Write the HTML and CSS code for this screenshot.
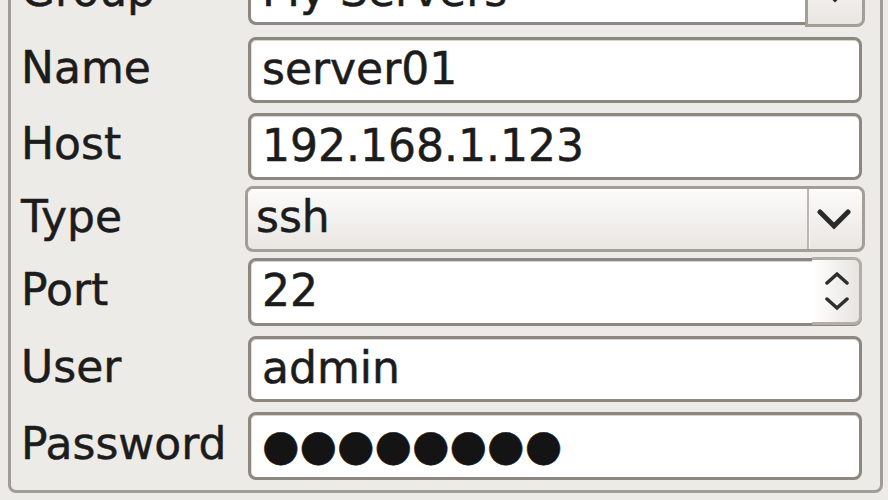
FILE: index.html
```html
<!DOCTYPE html>
<html>
<head>
<meta charset="utf-8">
<link rel="stylesheet" href="styles.css">
</head>
<body>
<div class="frame">
  <div class="row row-group">
    <div class="label">Group</div>
    <div class="combo-entry">
      <div class="ce-text">My Servers</div>
      <div class="ce-btn">
        <svg class="chev-down" viewBox="0 0 32 20" width="32" height="20"><polyline points="3,3 16,16 29,3"/></svg>
      </div>
    </div>
  </div>
  <div class="row row-name">
    <div class="label">Name</div>
    <div class="entry">server01</div>
  </div>
  <div class="row row-host">
    <div class="label">Host</div>
    <div class="entry">192.168.1.123</div>
  </div>
  <div class="row row-type">
    <div class="label">Type</div>
    <div class="combo">
      <div class="combo-text">ssh</div>
      <div class="combo-btn">
        <svg class="chev-down" viewBox="0 0 34 22" width="34" height="22"><polyline points="3,4 17,18 31,4"/></svg>
      </div>
    </div>
  </div>
  <div class="row row-port">
    <div class="label">Port</div>
    <div class="entry spin">
      <div class="spin-text">22</div>
      <div class="spin-btns">
        <svg class="chev-small" viewBox="0 0 26 14" width="26" height="14"><polyline points="3,12 13,3 23,12"/></svg>
        <svg class="chev-small" viewBox="0 0 26 14" width="26" height="14"><polyline points="3,2 13,11 23,2"/></svg>
      </div>
    </div>
  </div>
  <div class="row row-user">
    <div class="label">User</div>
    <div class="entry">admin</div>
  </div>
  <div class="row row-pass">
    <div class="label">Password</div>
    <div class="entry"><span class="dots">●●●●●●●●</span></div>
  </div>
</div>
</body>
</html>
```

FILE: styles.css
```css
html, body {
  margin: 0;
  padding: 0;
  background: #edebe7;
  overflow: hidden;
}
body {
  width: 888px;
  height: 500px;
  font-family: "DejaVu Sans", "Liberation Sans", sans-serif;
  font-size: 44px;
  color: #1c1c1c;
  -webkit-text-stroke: 0.5px #1c1c1c;
}
.frame {
  box-sizing: border-box;
  width: 875px;
  margin: -60px 0 0 8px;
  padding: 16px 18px 10px 10px;
  border: 3px solid #a19c96;
  border-radius: 0 0 8px 8px;
  display: flex;
  flex-direction: column;
}
.row {
  display: flex;
  align-items: center;
}
.label {
  flex: none;
  width: 227px;
  padding-bottom: 5px;
  line-height: 50px;
}
.row-name, .row-host, .row-user, .row-pass { margin-top: 10px; }
.row-type, .row-port { margin-top: 6px; }

.entry {
  box-sizing: border-box;
  flex: 1;
  height: 66px;
  display: flex;
  align-items: center;
  padding: 0 10px 3px 11px;
  background: #fff;
  border: 3px solid #8c8781;
  border-radius: 8px;
  box-shadow: inset 0 1px 0 #d6d2cd, inset 1px 0 0 #e2dfdb;
  white-space: nowrap;
}
.row-host .entry { height: 67px; }
.row-pass .entry { height: 68px; }

/* group combo entry */
.combo-entry {
  flex: 1;
  height: 68px;
  display: flex;
}
.ce-text {
  box-sizing: border-box;
  flex: 1;
  height: 66px;
  display: flex;
  align-items: center;
  padding: 0 10px 3px 11px;
  background: #fff;
  border: 3px solid #8c8781;
  border-right: none;
  border-radius: 8px 0 0 8px;
  white-space: nowrap;
}
.ce-btn {
  box-sizing: border-box;
  flex: none;
  width: 60px;
  height: 68px;
  margin-right: -3px;
  display: flex;
  align-items: center;
  justify-content: center;
  background: linear-gradient(#faf9f8, #e9e6e2);
  border: 3px solid #a39e98;
  border-radius: 0 8px 8px 0;
}

/* type combo */
.combo {
  box-sizing: border-box;
  flex: 1;
  height: 66px;
  margin: 0 -3px;
  display: flex;
  background: linear-gradient(#fcfbfa, #e9e6e2);
  border: 3px solid #a39e98;
  border-radius: 8px;
  box-shadow: inset 0 2px 0 #ffffff;
}
.combo-text {
  flex: 1;
  display: flex;
  align-items: center;
  padding: 0 0 5px 8px;
}
.combo-btn {
  flex: none;
  width: 49px;
  display: flex;
  align-items: center;
  justify-content: center;
  border-left: 2px solid #bbb6b0;
  box-shadow: inset 1px 0 0 #f7f6f4;
  padding-right: 4px;
}
.chev-down polyline {
  fill: none;
  stroke: #2a2a2a;
  stroke-width: 5;
  stroke-linecap: round;
  stroke-linejoin: miter;
}

/* spin */
.spin {
  height: 68px;
  padding-right: 0;
}
.spin-text {
  flex: 1;
}
.spin-btns {
  box-sizing: border-box;
  flex: none;
  width: 50px;
  height: 68px;
  margin: -3px -3px -3px 0;
  padding: 5px 0 5px 2px;
  display: flex;
  flex-direction: column;
  align-items: center;
  justify-content: space-around;
  background: linear-gradient(to right, #ffffff, #e7e4e0);
  border: 3px solid #b3aea8;
  border-left: none;
  border-radius: 0 8px 8px 0;
}
.chev-small polyline {
  fill: none;
  stroke: #2e2e2e;
  stroke-width: 3.5;
  stroke-linecap: round;
}

.dots {
  font-size: 43px;
  letter-spacing: 0;
  color: #141414;
}
```
